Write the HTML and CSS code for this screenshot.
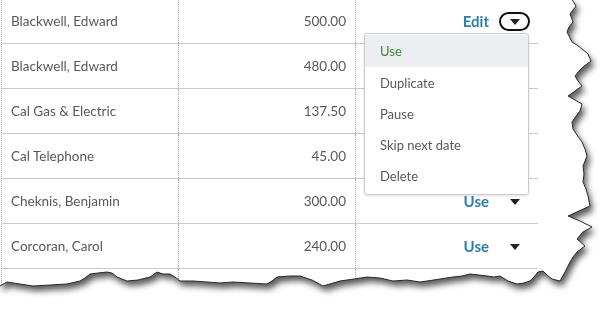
FILE: index.html
```html
<!DOCTYPE html>
<html>
<head>
<meta charset="utf-8">
<link rel="stylesheet" href="styles.css">
</head>
<body>
<div class="page">
  <div class="paper">
    <div class="sheet">
      <div class="table">
        <div class="row">
          <div class="cell name">Blackwell, Edward</div>
          <div class="cell amount">500.00</div>
          <div class="cell actions">
            <span class="link">Edit</span>
            <span class="toggle open"><i class="tri"></i></span>
            <div class="menu">
              <div class="item active">Use</div>
              <div class="item">Duplicate</div>
              <div class="item">Pause</div>
              <div class="item">Skip next date</div>
              <div class="item">Delete</div>
            </div>
          </div>
        </div>
        <div class="row">
          <div class="cell name">Blackwell, Edward</div>
          <div class="cell amount">480.00</div>
          <div class="cell actions"></div>
        </div>
        <div class="row">
          <div class="cell name">Cal Gas &amp; Electric</div>
          <div class="cell amount">137.50</div>
          <div class="cell actions"></div>
        </div>
        <div class="row">
          <div class="cell name">Cal Telephone</div>
          <div class="cell amount">45.00</div>
          <div class="cell actions"></div>
        </div>
        <div class="row">
          <div class="cell name">Cheknis, Benjamin</div>
          <div class="cell amount">300.00</div>
          <div class="cell actions">
            <span class="link">Use</span>
            <span class="toggle"><i class="tri"></i></span>
          </div>
        </div>
        <div class="row">
          <div class="cell name">Corcoran, Carol</div>
          <div class="cell amount">240.00</div>
          <div class="cell actions">
            <span class="link">Use</span>
            <span class="toggle"><i class="tri"></i></span>
          </div>
        </div>
        <div class="row last">
          <div class="cell name"></div>
          <div class="cell amount"></div>
          <div class="cell actions"></div>
        </div>
      </div>
    </div>
  </div>
  <svg class="edge" width="613" height="314" viewBox="0 0 613 314">
    <path d="M0 0.5 L572 0.5 L576 7 L570 15 L573 23 L569 28 L567 33 L572 43 L577 46 L582 50 L588 55 L591 62 L583 68 L579 72 L575 77 L578 82 L582 87 L575 92 L568 97 L575 101 L582 105 L580 112 L576 117 L572 123 L573 130 L577 136 L582 143 L585 150 L587 157 L583 167 L584 175 L583 183 L586 190 L588 197 L590 207 L579 212 L568 217 L580 222 L592 228 L583 233 L577 240 L585 247 L577 253 L573 258 L570 263 L565 273 L560 282 L556 281 L552 280 L547 276 L543 272 L538 273 L534 278 L530 282 L524 284 L517 285 L508 282 L500 277 L494 278 L487 277 L479 276 L470 275 L462 277 L453 278 L440 280 L427 282 L420 283 L407 281 L393 282 L380 279 L367 278 L354 280 L340 282 L323 287 L312 281 L300 277 L290 277 L277 278 L272 282 L267 285 L250 284 L233 283 L220 284 L207 283 L193 282 L180 282 L175 278 L170 275 L163 275 L157 273 L153 276 L150 278 L138 281 L127 282 L122 280 L117 278 L112 274 L107 273 L98 274 L90 275 L85 279 L80 282 L67 285 L50 286 L33 287 L20 285 L7 283 L0 287" fill="none" stroke="#2b2b2b" stroke-width="1"/>
  </svg>
</div>
</body>
</html>
```
FILE: styles.css
```css
html, body {
  margin: 0;
  padding: 0;
  background: #ffffff;
}
body {
  width: 613px;
  height: 314px;
  overflow: hidden;
  font-family: Lato, "Noto Sans", Arial, sans-serif;
}
.page {
  position: relative;
  width: 613px;
  height: 314px;
}
.paper {
  filter: drop-shadow(3px 5px 3px rgba(0, 0, 0, 0.65));
  width: 613px;
  height: 314px;
}
.sheet {
  width: 613px;
  height: 314px;
  background: #ffffff;
  clip-path: polygon(0 0, 572px 0, 576px 7px, 570px 15px, 573px 23px, 569px 28px, 567px 33px, 572px 43px, 577px 46px, 582px 50px, 588px 55px, 591px 62px, 583px 68px, 579px 72px, 575px 77px, 578px 82px, 582px 87px, 575px 92px, 568px 97px, 575px 101px, 582px 105px, 580px 112px, 576px 117px, 572px 123px, 573px 130px, 577px 136px, 582px 143px, 585px 150px, 587px 157px, 583px 167px, 584px 175px, 583px 183px, 586px 190px, 588px 197px, 590px 207px, 579px 212px, 568px 217px, 580px 222px, 592px 228px, 583px 233px, 577px 240px, 585px 247px, 577px 253px, 573px 258px, 570px 263px, 565px 273px, 560px 282px, 556px 281px, 552px 280px, 547px 276px, 543px 272px, 538px 273px, 534px 278px, 530px 282px, 524px 284px, 517px 285px, 508px 282px, 500px 277px, 494px 278px, 487px 277px, 479px 276px, 470px 275px, 462px 277px, 453px 278px, 440px 280px, 427px 282px, 420px 283px, 407px 281px, 393px 282px, 380px 279px, 367px 278px, 354px 280px, 340px 282px, 323px 287px, 312px 281px, 300px 277px, 290px 277px, 277px 278px, 272px 282px, 267px 285px, 250px 284px, 233px 283px, 220px 284px, 207px 283px, 193px 282px, 180px 282px, 175px 278px, 170px 275px, 163px 275px, 157px 273px, 153px 276px, 150px 278px, 138px 281px, 127px 282px, 122px 280px, 117px 278px, 112px 274px, 107px 273px, 98px 274px, 90px 275px, 85px 279px, 80px 282px, 67px 285px, 50px 286px, 33px 287px, 20px 285px, 7px 283px, 0 287px);
}
.table {
  margin-left: 1px;
  margin-top: -1px;
  width: 536px;
  border-left: 1px dotted #a8a8a8;
}
.row {
  display: grid;
  grid-template-columns: 177px 177px 181px;
  height: 45px;
  box-sizing: border-box;
  border-bottom: 1px solid #c9c9c9;
}
.row.last {
  border-bottom: none;
  height: 40px;
}
.cell {
  display: flex;
  align-items: center;
  font-size: 13.5px;
  color: #585858;
}
.name {
  border-right: 1px dotted #a8a8a8;
  padding-left: 9px;
}
.amount {
  border-right: 1px dotted #a8a8a8;
  justify-content: flex-end;
  padding-right: 9px;
}
.actions {
  position: relative;
  justify-content: flex-end;
  padding-right: 7px;
  gap: 10px;
}
.link {
  color: #2a7db3;
  font-size: 15px;
  font-weight: 700;
}
.toggle {
  width: 31px;
  height: 19px;
  box-sizing: border-box;
  border: 2px solid transparent;
  border-radius: 10px;
  display: flex;
  align-items: center;
  justify-content: center;
}
.toggle.open {
  border-color: #111111;
}
.tri {
  display: block;
  width: 0;
  height: 0;
  border-left: 5px solid transparent;
  border-right: 5px solid transparent;
  border-top: 6px solid #222222;
  margin-top: 2px;
}
.menu {
  position: absolute;
  left: 8px;
  top: 34px;
  width: 165px;
  box-sizing: border-box;
  border: 1px solid #cccccc;
  border-radius: 3px;
  background: #ffffff;
  box-shadow: 0 1px 3px rgba(0, 0, 0, 0.12);
  padding: 1px 0 3px;
  z-index: 2;
}
.item {
  height: 31px;
  display: flex;
  align-items: center;
  padding-left: 15px;
  font-size: 13px;
  color: #585858;
}
.item.active {
  background: #eceef1;
  color: #3b8a36;
  height: 32px;
}
.edge {
  position: absolute;
  left: 0;
  top: 0;
  pointer-events: none;
}
```
